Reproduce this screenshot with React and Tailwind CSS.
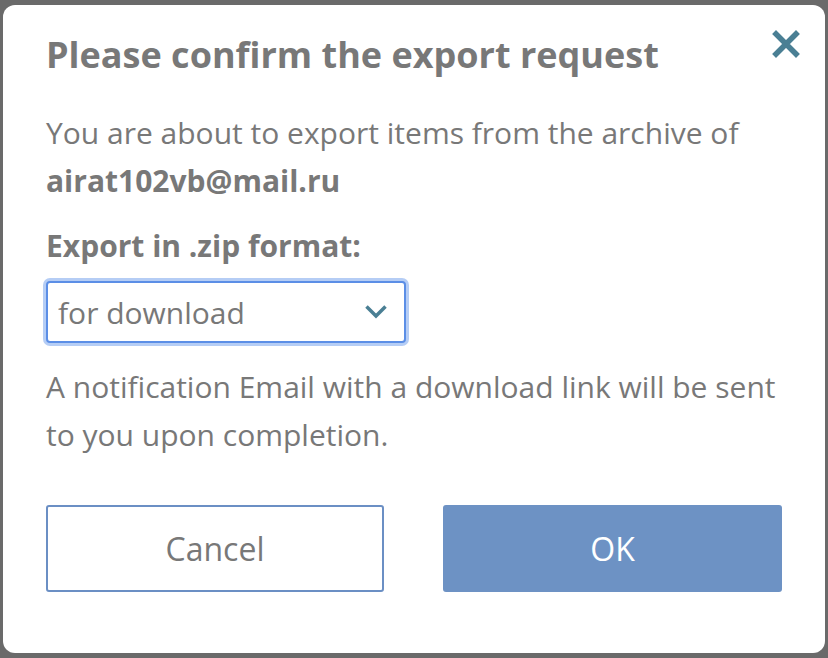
import { useState } from "react";

export default function App() {
  const [target, setTarget] = useState("download");

  return (
    <div
      className="min-h-screen w-full bg-[#6a6a6a] pl-[3px] pt-[5px]"
      style={{ fontFamily: '"Open Sans", "Liberation Sans", sans-serif' }}
    >
      <div className="relative flex h-[648px] w-[822px] flex-col rounded-[12px] bg-white px-[43px] pt-[26px] text-[#787878]">
        <button
          type="button"
          className="absolute right-[24px] top-[24px] text-[#4a7f94]"
          aria-label="Close"
        >
          <svg width="30" height="30" viewBox="0 0 30 30">
            <path
              d="M5 5 L25 25 M25 5 L5 25"
              stroke="currentColor"
              strokeWidth="5.5"
              strokeLinecap="square"
            />
          </svg>
        </button>

        <h2 className="text-[36px] font-bold leading-[48px]">
          Please confirm the export request
        </h2>

        <p className="mt-[30px] text-[30px] leading-[48px]">
          You are about to export items from the archive of
          <br />
          <span className="font-bold">airat102vb@mail.ru</span>
        </p>

        <label className="mt-[17px] block text-[30px] font-bold leading-[48px]">
          Export in .zip format:
        </label>

        <div className="relative mt-[11px] w-[360px]">
          <select
            value={target}
            onChange={(e) => setTarget(e.target.value)}
            className="h-[62px] w-full appearance-none rounded-[4px] border-2 border-[#5b8ee6] bg-white pl-[10px] text-[30px] text-[#787878] outline-none ring-[3px] ring-[#b5cdf5]"
          >
            <option value="download">for download</option>
            <option value="email">by email</option>
          </select>
          <svg
            className="pointer-events-none absolute right-[18px] top-[23px]"
            width="24"
            height="15"
            viewBox="0 0 24 15"
          >
            <path
              d="M2.5 2.5 L12 12 L21.5 2.5"
              fill="none"
              stroke="#4a7f94"
              strokeWidth="3.5"
            />
          </svg>
        </div>

        <p className="mt-[20px] text-[30px] leading-[48px]">
          A notification Email with a download link will be sent
          <br />
          to you upon completion.
        </p>

        <div className="mt-[46px] flex justify-between">
          <button
            type="button"
            className="h-[87px] w-[338px] rounded-[3px] border-2 border-[#6b8fc4] bg-white text-[32px] text-[#787878]"
          >
            Cancel
          </button>
          <button
            type="button"
            className="h-[87px] w-[339px] rounded-[3px] bg-[#6d92c4] text-[32px] text-white"
          >
            OK
          </button>
        </div>
      </div>
    </div>
  );
}
